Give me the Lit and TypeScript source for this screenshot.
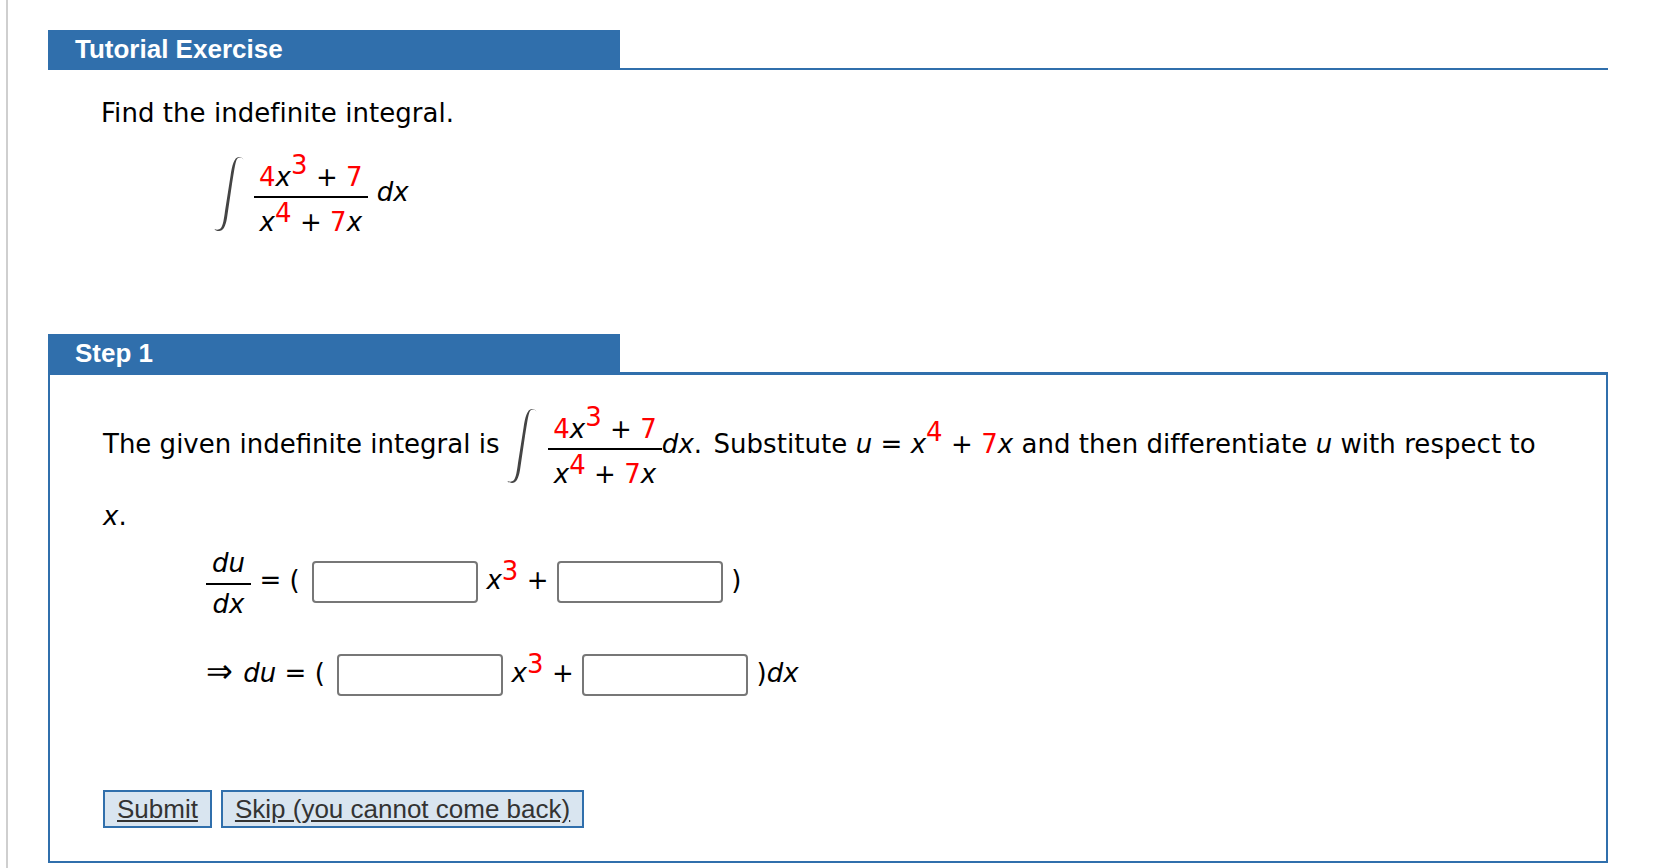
import { LitElement, html, css } from "lit";
import { customElement } from "lit/decorators.js";

const integral = () => html`<svg class="int" viewBox="0 0 30 76" width="30" height="76" aria-hidden="true">
  <path d="M29.500 3.500C27.500 .8 24 .6 22.500 4C21 8 20 16 18 28L13 62C11.500 71 9 75 5 75C3 75 1 74.500 .5 73C2.500 74 5 74 7 72C9 69 10 63 11 55L16.500 20C18 10 20 1 25 1C27 1 28.500 2 29.500 3.500Z" fill="#444"/>
</svg>`;

const frac = (num: unknown, den: unknown, cls = "") => html`<span class="frac ${cls}"><span class="num">${num}</span><span class="den">${den}</span></span>`;

const r = (s: string) => html`<span class="red">${s}</span>`;
const v = (s: string) => html`<i>${s}</i>`;
const sup = (s: string) => html`<sup class="red">${s}</sup>`;

const mainFrac = () => frac(
  html`${r("4")}${v("x")}${sup("3")} + ${r("7")}`,
  html`${v("x")}${sup("4")} + ${r("7")}${v("x")}`
);

@customElement("app-root")
export class AppRoot extends LitElement {
  static styles = css`
    :host {
      display: block;
      width: 1662px;
      height: 868px;
      overflow: hidden;
      background: #fff;
      font-family: "DejaVu Sans", Verdana, sans-serif;
      font-size: 26px;
      letter-spacing: .05px;
      color: #000;
    }
    .page {
      box-sizing: border-box;
      height: 868px;
      margin-left: 6px;
      border-left: 2px solid #cfcfcf;
      padding: 30px 54px 0 40px;
    }
    .head {
      border-bottom: 2px solid #306fac;
      height: 38px;
    }
    .title {
      box-sizing: border-box;
      width: 572px;
      height: 40px;
      background: #306fac;
      color: #fff;
      font: bold 26px/38px "Liberation Sans", Arial, sans-serif;
      letter-spacing: 0;
      padding-left: 27px;
    }
    .intro {
      padding: 29px 0 0 53px;
      height: 264px;
      box-sizing: border-box;
    }
    .intro p {
      margin: 0;
      line-height: 28px;
    }
    .display {
      display: flex;
      align-items: center;
      margin: 25px 0 0 113px;
    }
    .display .int { margin-right: 10px; }
    .display .dx { margin-left: 9px; margin-top: -4px; }
    .box {
      box-sizing: border-box;
      height: 490px;
      border: 2px solid #306fac;
      margin-top: -1px;
      padding: 29px 50px 0 53px;
    }
    .line1 { line-height: 76px; }
    .line1 .int { margin: 0 3px 0 -1px; }
    .lead { letter-spacing: 0; }
    .dot { margin-right: 3px; }
    .int { vertical-align: middle; flex: none; }
    .frac {
      display: inline-flex;
      flex-direction: column;
      align-items: center;
      vertical-align: middle;
      line-height: 1;
    }
    .frac .num {
      align-self: stretch;
      text-align: center;
      border-bottom: 2px solid #000;
      padding: 12px 5px 6px;
      white-space: nowrap;
    }
    .frac .den {
      padding: 11px 5px 0;
      white-space: nowrap;
    }
    .red { color: #f00; }
    sup {
      font-size: 26px;
      line-height: 0;
      vertical-align: 12px;
    }
    .den sup { vertical-align: 9px; }
    .xdot { line-height: 28px; margin-top: 15px; }
    .row { line-height: 42px; white-space: nowrap; }
    .row sup { vertical-align: 9px; }
    .r1 { margin: 16px 0 0 103px; height: 76px; }
    .r2 { margin: 30px 0 0 103px; height: 42px; }
    .frac.small .num { padding: 4px 6px 7px; }
    .frac.small .den { padding: 6px 6px 0; }
    .arrow { font-size: 32px; line-height: 0; margin-right: 2px; }
    input {
      box-sizing: border-box;
      width: 166px;
      height: 42px;
      border: 2px solid #777;
      border-radius: 4px;
      background: #fff;
      padding: 0;
      margin: 0;
      vertical-align: middle;
    }
    input.first { margin-left: 4px; }
    .actions {
      display: flex;
      gap: 9px;
      margin: 96px 0 0 0;
    }
    .btn {
      box-sizing: border-box;
      height: 38px;
      border: 2px solid #306fac;
      background: #d9e5f0;
      color: #333;
      font: 26px/34px "Liberation Sans", Arial, sans-serif;
      letter-spacing: 0;
      text-decoration: underline;
      padding: 0 12px;
    }
  `;

  render() {
    return html`<div class="page">
      <div class="head"><div class="title">Tutorial Exercise</div></div>
      <div class="intro">
        <p>Find the indefinite integral.</p>
        <div class="display">${integral()}${mainFrac()}<i class="dx">dx</i></div>
      </div>
      <div class="head"><div class="title">Step 1</div></div>
      <div class="box">
        <div class="line1"><span class="lead">The given indefinite integral is</span> ${integral()} ${mainFrac()}<span class="dot">${v("dx")}.</span> Substitute ${v("u")} = ${v("x")}${sup("4")} + ${r("7")}${v("x")} and then differentiate ${v("u")} with respect to</div>
        <div class="xdot">${v("x")}.</div>
        <div class="row r1">${frac(v("du"), v("dx"), "small")} = ( <input class="first" aria-label="a" /> ${v("x")}${sup("3")} + <input aria-label="b" /> )</div>
        <div class="row r2"><span class="arrow">⇒</span> ${v("du")} = ( <input class="first" aria-label="c" /> ${v("x")}${sup("3")} + <input aria-label="d" /> )${v("dx")}</div>
        <div class="actions">
          <div class="btn">Submit</div>
          <div class="btn">Skip (you cannot come back)</div>
        </div>
      </div>
    </div>`;
  }
}
